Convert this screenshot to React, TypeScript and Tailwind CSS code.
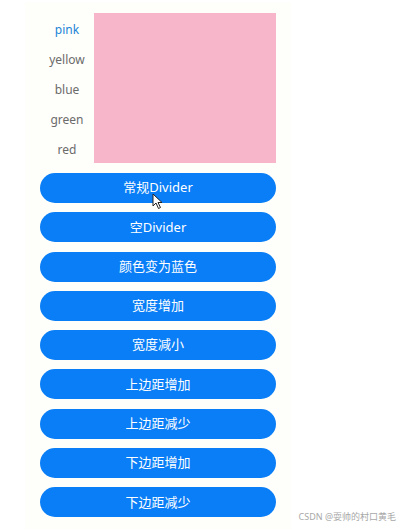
const tabs = ['pink', 'yellow', 'blue', 'green', 'red'];

const buttons = [
  '常规Divider',
  '空Divider',
  '颜色变为蓝色',
  '宽度增加',
  '宽度减小',
  '上边距增加',
  '上边距减少',
  '下边距增加',
  '下边距减少',
];

export default function App() {
  return (
    <div
      className="relative w-[411px] h-[529px] bg-white overflow-hidden"
      style={{ fontFamily: '"Noto Sans", "Noto Sans CJK SC", sans-serif' }}
    >
      <div className="ml-[25px] mt-[2px] w-[266px] h-[527px] bg-[#fefefa] pt-[11px] pl-[15px]">
        {/* tabs + content */}
        <div className="flex h-[150px]">
          <div className="w-[54px] pt-[2px] flex flex-col">
            {tabs.map((t, i) => (
              <div
                key={t}
                className={`h-[30px] shrink-0 flex items-center justify-center text-[12px] ${
                  i === 0 ? 'text-[#1b84d8]' : 'text-[#6b6b6b]'
                }`}
              >
                {t}
              </div>
            ))}
          </div>
          <div className="w-[182px] h-[150px] bg-[#f8b6cb]" />
        </div>

        {/* buttons */}
        <div className="mt-[10px] w-[236px] flex flex-col gap-[9.3px]">
          {buttons.map((b, i) => (
            <div
              key={b}
              className="relative h-[30px] rounded-full bg-[#0a7ef6] flex items-center justify-center text-white text-[13px]"
            >
              {b}
              {i === 0 && (
                <svg
                  className="absolute left-[112px] top-[20px]"
                  width="12"
                  height="17"
                  viewBox="0 0 12 17"
                >
                  <path
                    d="M1 1 L1 13 L4 10 L6.5 15.5 L8.5 14.5 L6 9.5 L10 9.5 Z"
                    fill="#ffffff"
                    stroke="#222"
                    strokeWidth="1"
                    strokeLinejoin="round"
                  />
                </svg>
              )}
            </div>
          ))}
        </div>
      </div>

      <div className="absolute right-[15px] bottom-[6px] text-[9px] text-[#a8a8a8]">
        CSDN @耍帅的村口黄毛
      </div>
    </div>
  );
}
